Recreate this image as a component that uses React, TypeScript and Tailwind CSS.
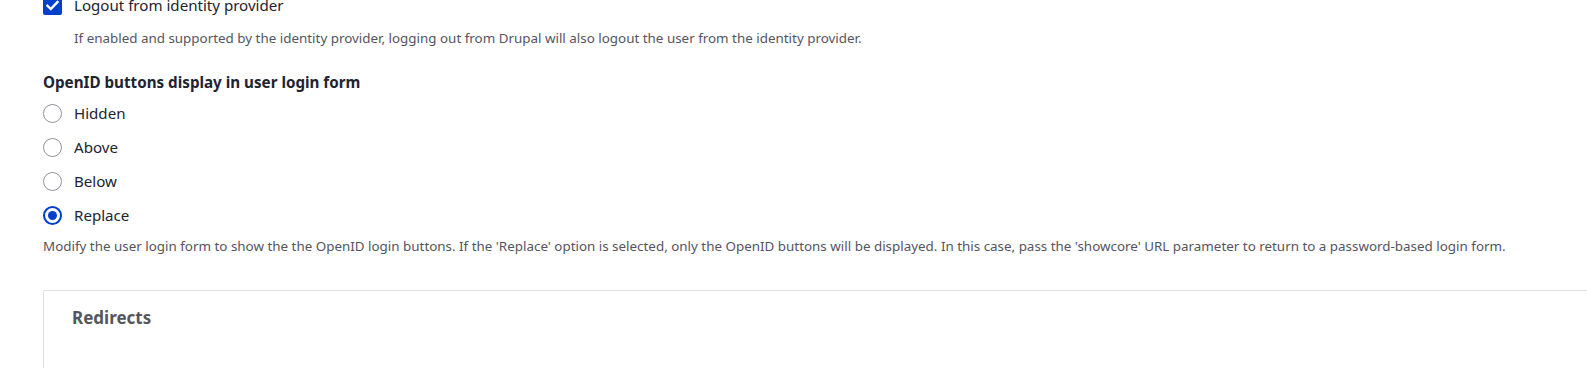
import React from "react";

const radios = ["Hidden", "Above", "Below", "Replace"];

function Checkbox() {
  return (
    <span className="flex h-[19px] w-[19px] shrink-0 items-center justify-center rounded-[2px] bg-[#003ecc]">
      <svg width="13" height="11" viewBox="0 0 13 11" fill="none">
        <path d="M1.5 5.8 L4.8 9 L11.5 2" stroke="white" strokeWidth="2.4" strokeLinecap="square" />
      </svg>
    </span>
  );
}

function Radio({ checked }: { checked: boolean }) {
  if (checked) {
    return (
      <span className="flex h-[19px] w-[19px] shrink-0 items-center justify-center rounded-full border-[2px] border-[#003ecc] bg-white">
        <span className="h-[9px] w-[9px] rounded-full bg-[#003ecc]" />
      </span>
    );
  }
  return <span className="h-[19px] w-[19px] shrink-0 rounded-full border border-[#8e929c] bg-white" />;
}

export default function App() {
  return (
    <div className="h-[368px] w-full overflow-hidden bg-white font-['Segoe_UI','Noto_Sans',sans-serif] text-[#222330]">
      <div className="pl-[43px]">
        <div className="-mt-[4px] flex h-[19px] items-center gap-[12px]">
          <Checkbox />
          <span className="text-[15.1px] leading-[19px]">Logout from identity provider</span>
        </div>
        <p className="ml-[31px] mt-[14px] text-[13.4px] leading-[18px] text-[#545560]">
          If enabled and supported by the identity provider, logging out from Drupal will also logout the user from the identity provider.
        </p>

        <div className="mt-[25px] text-[15.2px] font-bold leading-[20px]">OpenID buttons display in user login form</div>
        <div className="mt-[4px] flex flex-col">
          {radios.map((r) => (
            <label key={r} className="flex h-[34px] items-center gap-[12px]">
              <Radio checked={r === "Replace"} />
              <span className="text-[15.1px]">{r}</span>
            </label>
          ))}
        </div>
        <p className="mt-[5px] text-[13.4px] leading-[18px] text-[#545560]">
          Modify the user login form to show the the OpenID login buttons. If the 'Replace' option is selected, only the OpenID buttons will be displayed. In this case, pass the 'showcore' URL parameter to return to a password-based login form.
        </p>

        <div className="mt-[35px] h-[120px] w-[1600px] rounded-tl-[2px] border border-[#dedfe4] px-[28px] pt-[15px]">
          <h3 className="text-[17px] font-bold leading-[24px] text-[#55565b]">Redirects</h3>
        </div>
      </div>
    </div>
  );
}
